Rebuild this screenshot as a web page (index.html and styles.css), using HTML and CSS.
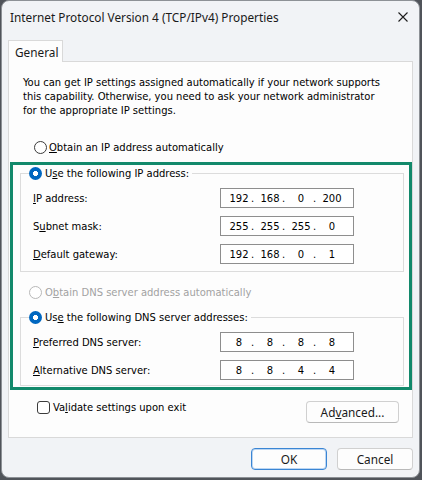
FILE: index.html
```html
<!DOCTYPE html>
<html>

<head>
  <meta charset="UTF-8">
  <title>Internet Protocol Version 4 (TCP/IPv4) Properties</title>
  <link rel="stylesheet" href="styles.css">
</head>

<body>
  <div class="window">
    <div class="titlebar">
      <span class="title">Internet Protocol Version 4 (TCP/IPv4) Properties</span>
      <svg class="close" width="10" height="10" viewBox="0 0 10 10">
        <path d="M0.5 0.5 L9.5 9.5 M9.5 0.5 L0.5 9.5" stroke="#1c1c1c" stroke-width="1.1" fill="none" />
      </svg>
    </div>

    <div class="tabs">
      <div class="tab">General</div>
    </div>

    <div class="panel">
      <p class="intro">
        You can get IP settings assigned automatically if your network supports<br>
        this capability. Otherwise, you need to ask your network administrator<br>
        for the appropriate IP settings.
      </p>

      <div class="option first">
        <span class="radio"></span><span><u>O</u>btain an IP address automatically</span>
      </div>

      <div class="highlight">
        <fieldset class="group">
          <legend>
            <span class="radio checked"></span><span>U<u>s</u>e the following IP address:</span>
          </legend>
          <div class="row">
            <span class="label"><u>I</u>P address:</span>
            <div class="ip"><span>192</span><i>.</i><span>168</span><i>.</i><span>0</span><i>.</i><span>200</span></div>
          </div>
          <div class="row">
            <span class="label">S<u>u</u>bnet mask:</span>
            <div class="ip"><span>255</span><i>.</i><span>255</span><i>.</i><span>255</span><i>.</i><span>0</span></div>
          </div>
          <div class="row">
            <span class="label"><u>D</u>efault gateway:</span>
            <div class="ip"><span>192</span><i>.</i><span>168</span><i>.</i><span>0</span><i>.</i><span>1</span></div>
          </div>
        </fieldset>

        <div class="option disabled">
          <span class="radio"></span><span>O<u>b</u>tain DNS server address automatically</span>
        </div>

        <fieldset class="group dns">
          <legend>
            <span class="radio checked"></span><span>Us<u>e</u> the following DNS server addresses:</span>
          </legend>
          <div class="row">
            <span class="label"><u>P</u>referred DNS server:</span>
            <div class="ip"><span>8</span><i>.</i><span>8</span><i>.</i><span>8</span><i>.</i><span>8</span></div>
          </div>
          <div class="row">
            <span class="label"><u>A</u>lternative DNS server:</span>
            <div class="ip"><span>8</span><i>.</i><span>8</span><i>.</i><span>4</span><i>.</i><span>4</span></div>
          </div>
        </fieldset>
      </div>

      <div class="foot">
        <div class="option check-row">
          <span class="checkbox"></span><span>Va<u>l</u>idate settings upon exit</span>
        </div>
        <button class="btn advanced">Ad<u>v</u>anced...</button>
      </div>
    </div>

    <div class="actions">
      <button class="btn default">OK</button>
      <button class="btn">Cancel</button>
    </div>
  </div>
</body>

</html>
```
FILE: styles.css
```css
html,
body {
  margin: 0;
  height: 100%;
}

body {
  background: #50545a;
  font-family: "DejaVu Sans Condensed", "DejaVu Sans", sans-serif;
  font-size: 11.1px;
  color: #000;
}

.window {
  margin: 0 2px 0 1px;
  height: 478px;
  box-sizing: border-box;
  background: #f1f3f6;
  border: 1px solid #8d9196;
  border-radius: 8px;
  padding: 0 6px 6px;
  display: flex;
  flex-direction: column;
}

.titlebar {
  height: 31px;
  display: flex;
  align-items: center;
  justify-content: space-between;
  margin: 0 -6px;
  padding: 0 11px 0 8px;
}

.title {
  font-family: "Noto Sans", sans-serif;
  font-size: 11.8px;
  color: #1a1a1a;
}

.tabs {
  display: flex;
  margin-top: 8px;
  margin-bottom: -1px;
  position: relative;
  z-index: 1;
}

.tab {
  width: 55px;
  height: 22px;
  box-sizing: border-box;
  padding: 3px 0 0 6px;
  background: #fdfdfd;
  border: 1px solid #d9d9d9;
  border-bottom: none;
  font-family: "Noto Sans", sans-serif;
  font-size: 11.8px;
  color: #1a1a1a;
}

.panel {
  background: #fdfdfd;
  border: 1px solid #d9d9d9;
  padding: 14px 0 0;
}

.intro {
  margin: 0;
  padding: 0 14px;
  line-height: 14px;
  white-space: nowrap;
}

.option {
  display: flex;
  align-items: center;
  height: 16px;
  gap: 3px;
}

.option.first {
  margin: 21px 0 0 25px;
  gap: 2px;
}

.option.disabled {
  margin: 12px 0 0 16px;
  color: #a2a2a2;
}

.radio {
  width: 13px;
  height: 13px;
  box-sizing: border-box;
  border: 1px solid #3b3b3b;
  border-radius: 50%;
  background: #fff;
  flex: none;
}

.radio.checked {
  border: none;
  background: radial-gradient(circle, #fff 0 2.3px, #0067c0 2.8px);
}

.option.disabled .radio {
  border-color: #b8b8b8;
}

.highlight {
  margin: 7px 0 0 1px;
  border: 3px solid #12896b;
  padding-bottom: 1px;
}

.group {
  margin: 0 5px 0 7px;
  padding: 7px 12px 7px;
  border: 1px solid #dcdcdc;
  display: flex;
  flex-direction: column;
  gap: 8px;
}

.group.dns {
  margin-top: 9px;
  padding-bottom: 5px;
}

.group legend {
  display: flex;
  align-items: center;
  gap: 3px;
  height: 16px;
  padding: 0 3px 0 0;
  margin-left: -4px;
}

.row {
  display: grid;
  grid-template-columns: 187px 134px;
  align-items: center;
  height: 20px;
}

.ip {
  height: 20px;
  box-sizing: border-box;
  border: 1px solid #8e8e8e;
  background: #fff;
  display: flex;
  align-items: center;
  padding-left: 6px;
}

.ip span {
  width: 24px;
  text-align: center;
}

.ip i {
  font-style: normal;
  width: 7px;
}

.foot {
  display: flex;
  justify-content: space-between;
  align-items: flex-start;
  padding: 11px 13px 14px 28px;
}

.check-row {
  margin-top: -2px;
}

.checkbox {
  width: 13px;
  height: 13px;
  box-sizing: border-box;
  border: 1px solid #3b3b3b;
  border-radius: 3px;
  background: #fff;
}

.btn {
  font-family: "Noto Sans", sans-serif;
  font-size: 11.8px;
  color: #1a1a1a;
  height: 22px;
  width: 76px;
  padding: 0;
  background: #fdfdfd;
  border: 1px solid #d0d0d0;
  border-bottom-color: #b9b9b9;
  border-radius: 4px;
}

.btn.advanced {
  width: 93px;
}

.btn.default {
  border: 1px solid #3a85d4;
  box-shadow: inset 0 0 0 1px #bcd6f2;
}

.actions {
  display: flex;
  justify-content: flex-end;
  gap: 10px;
  margin-top: 10px;
}
```
